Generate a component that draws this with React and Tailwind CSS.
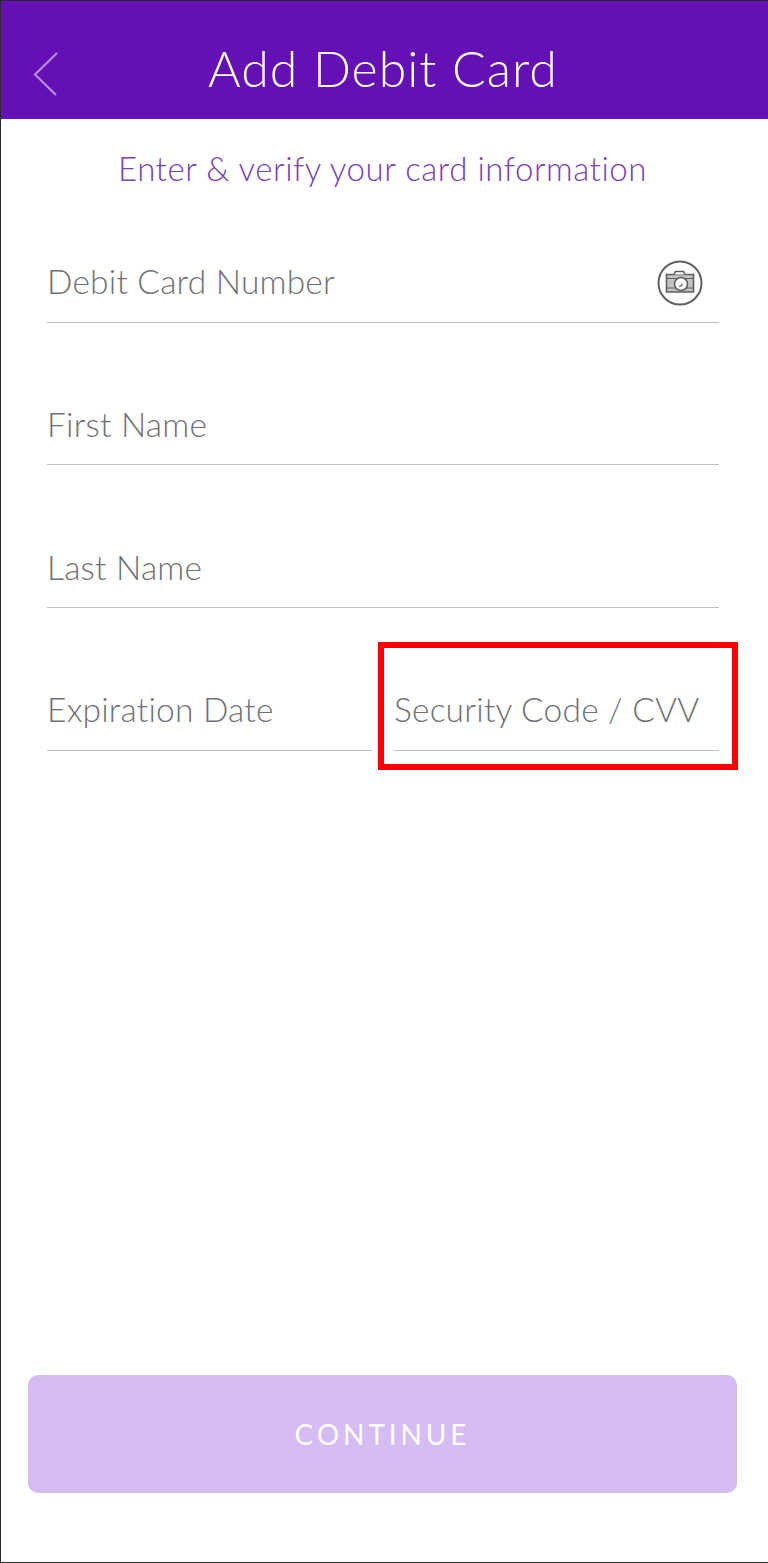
import React from 'react';

function CameraIcon() {
  return (
    <svg width="46" height="46" viewBox="0 0 46 46" fill="none">
      <circle cx="23" cy="23" r="21.5" stroke="#5f5f5f" strokeWidth="2" />
      <path d="M9.5 14.5h27v17.5h-27z" fill="#c4c4c4" stroke="#5f5f5f" strokeWidth="1.6" />
      <path d="M9.5 18.5h27M9.5 28h27" stroke="#5f5f5f" strokeWidth="1.2" />
      <path d="M17 14.5l1.5-3h8l1.5 3" fill="#fff" stroke="#5f5f5f" strokeWidth="1.6" />
      <circle cx="24" cy="24" r="6.5" fill="#fff" stroke="#5f5f5f" strokeWidth="1.6" />
      <path d="M22 26.5c1.6 0 3-.9 3.4-2.6" stroke="#5f5f5f" strokeWidth="1.2" />
    </svg>
  );
}

function Field({ label, className = '', children }) {
  return (
    <div className={`h-[142.67px] flex flex-col justify-end ${className}`}>
      <div className="flex items-center justify-between h-[78px] pb-[2px] border-b border-[#bfbfc1]">
        <span className="text-[33.5px] leading-none text-[#707073] font-light tracking-[0.2px]">{label}</span>
        {children}
      </div>
    </div>
  );
}

export default function App() {
  return (
    <div className="relative w-[768px] h-[1563px] bg-white flex flex-col border-l border-t border-b border-[#2a2a2c] font-['Lato',sans-serif] overflow-hidden">
      <header className="h-[118px] shrink-0 bg-[#6310b4] flex items-center justify-center relative pt-[16px]">
        <svg className="absolute left-[32px] top-[50px]" width="26" height="46" viewBox="0 0 26 46" fill="none">
          <path d="M24 2L2 23.5L23 44" stroke="#b98ae6" strokeWidth="2.2" />
        </svg>
        <h1 className="text-[50px] leading-none font-light text-white tracking-[1px] -ml-[3px]">Add Debit Card</h1>
      </header>

      <p className="mt-[29px] pr-[4px] text-center text-[33px] leading-[40px] font-light text-[#7440bb] tracking-[0.55px]">
        Enter &amp; verify your card information
      </p>

      <div className="flex-1 flex flex-col px-[46px] mr-[49px] -mt-[8px]">
        <div className="w-[672px]">
          <Field label="Debit Card Number">
            <span className="mr-[16px] mt-[2px]"><CameraIcon /></span>
          </Field>
          <Field label="First Name" />
          <Field label="Last Name" />
          <div className="flex gap-[22px]">
            <Field label="Expiration Date" className="w-[325px]" />
            <Field label="Security Code / CVV" className="w-[325px]" />
          </div>
        </div>
      </div>

      <button className="mx-[27px] mb-[69px] w-[709px] h-[118px] rounded-[10px] bg-[#d5bcf3] text-[28px] text-white font-normal tracking-[3.9px]">
        CONTINUE
      </button>

      <div className="absolute left-[377px] top-[641px] w-[360px] h-[128px] border-[6px] border-[#ff0000]" />
    </div>
  );
}
